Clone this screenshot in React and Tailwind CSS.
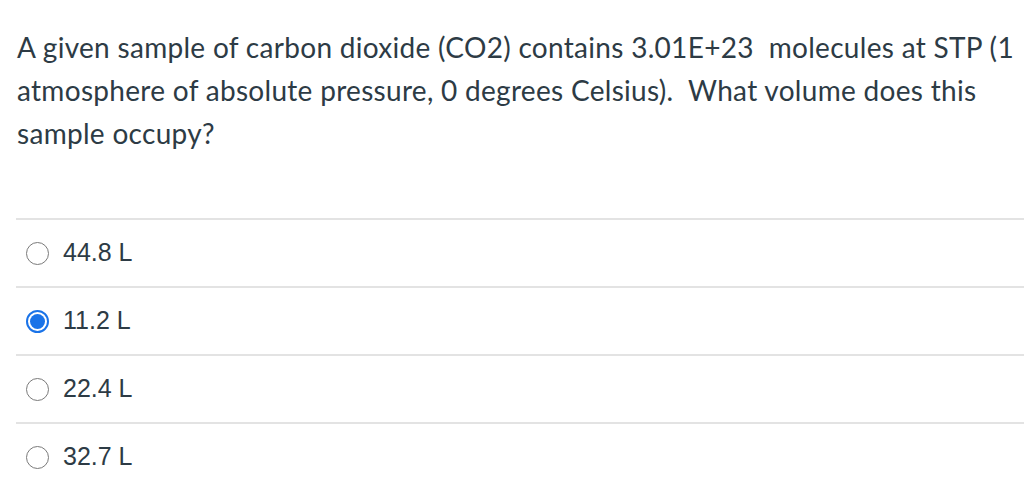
import React from 'react';

const options = [
  { label: '44.8 L', selected: false },
  { label: '11.2 L', selected: true },
  { label: '22.4 L', selected: false },
  { label: '32.7 L', selected: false },
];

function Radio({ selected }) {
  if (selected) {
    return (
      <span className="w-[23px] h-[23px] rounded-full border-2 border-[#1a73e8] flex items-center justify-center shrink-0">
        <span className="w-[15px] h-[15px] rounded-full bg-[#1a73e8]" />
      </span>
    );
  }
  return <span className="w-[23px] h-[23px] rounded-full border-[1.5px] border-[#7a7a7a] shrink-0" />;
}

export default function App() {
  return (
    <div className="w-[1024px] h-[479px] bg-white overflow-hidden text-[#2d3b45]">
      <p className="pl-[17px] pr-1 pt-[26px] text-[28px] leading-[43px] tracking-[0.3px] font-['Lato',sans-serif]">
        A given sample of carbon dioxide (CO2) contains 3.01E+23&nbsp; molecules at STP (1 atmosphere of absolute pressure, 0 degrees Celsius).&nbsp; What volume does this sample occupy?
      </p>
      <div className="ml-[16px] mt-[63px]">
        {options.map((o) => (
          <div key={o.label} className="h-[68px] border-t-2 border-[#e3e3e3] flex items-center pl-[10px] gap-[14px]">
            <Radio selected={o.selected} />
            <span className="text-[25px] font-['Liberation_Sans',sans-serif]">{o.label}</span>
          </div>
        ))}
      </div>
    </div>
  );
}
